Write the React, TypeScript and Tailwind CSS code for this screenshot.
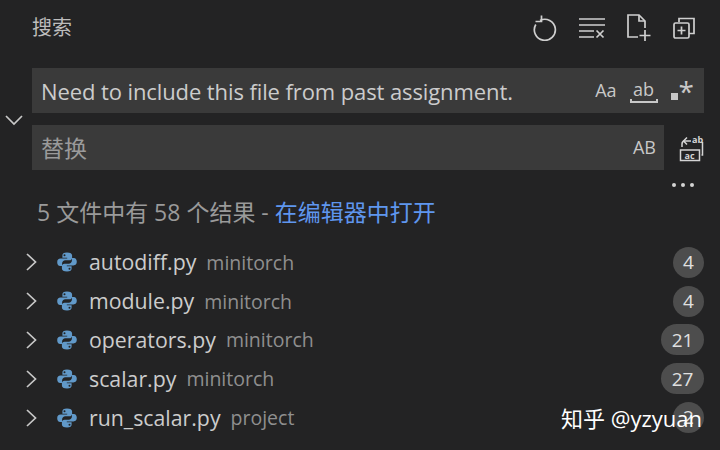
const font = { fontFamily: '"Open Sans", "Noto Sans CJK SC", sans-serif' };

const results = [
  { name: "autodiff.py", dir: "minitorch", count: "4" },
  { name: "module.py", dir: "minitorch", count: "4" },
  { name: "operators.py", dir: "minitorch", count: "21" },
  { name: "scalar.py", dir: "minitorch", count: "27" },
  { name: "run_scalar.py", dir: "project", count: "2" },
];

const PythonIcon = () => (
  <svg width="22" height="22" viewBox="0 0 22 22" className="shrink-0">
    <path d="M11 1.500c-3.400 0-4.600 1.200-4.600 3v2.200h4.800v.9H4.600C2.400 7.600 1.200 9 1.200 11.200s1.200 3.700 3 3.700h1.900v-2.400c0-1.900 1.400-3.200 3.200-3.200h4.200c1.500 0 2.600-1.100 2.600-2.600V4.500c0-1.900-1.700-3-5.100-3z" fill="#6199c9" />
    <path d="M11 20.500c3.400 0 4.600-1.200 4.600-3v-2.200h-4.800v-.9h6.600c2.200 0 3.400-1.400 3.400-3.600s-1.200-3.700-3-3.700h-1.900v2.400c0 1.900-1.400 3.200-3.200 3.200H8.500c-1.500 0-2.600 1.100-2.600 2.600v2.200c0 1.900 1.700 3 5.100 3z" fill="#6199c9" />
    <circle cx="8.500" cy="4.200" r="1" fill="#232324" />
    <circle cx="13.500" cy="17.800" r="1" fill="#232324" />
  </svg>
);

const Chevron = () => (
  <svg width="14" height="20" viewBox="0 0 14 20" fill="none" stroke="#c8c8c8" strokeWidth="1.700" className="shrink-0">
    <path d="M3 2l8.500 8L3 18" />
  </svg>
);

const HeaderIcons = () => (
  <div className="flex items-center gap-5">
    <svg width="26" height="26" viewBox="0 0 26 26" fill="none" stroke="#cfcfcf" strokeWidth="1.700">
      <path d="M8 5.500A10.500 10.500 0 1 1 3.800 9.500" />
      <path d="M9.500 0.500V6.500H3.500" />
    </svg>
    <svg width="28" height="26" viewBox="0 0 28 26" fill="none" stroke="#cfcfcf" strokeWidth="1.700">
      <path d="M1 4h26M1 10h26M1 16h15M1 22h15" />
      <path d="M18.500 15.500l7 7M25.500 15.500l-7 7" />
    </svg>
    <svg width="26" height="28" viewBox="0 0 26 28" fill="none" stroke="#cfcfcf" strokeWidth="1.700">
      <path d="M12 23H2V1h11l6 6v7" />
      <path d="M13 1v6h6" />
      <path d="M19 16v11M13.500 21.500h11" />
    </svg>
    <svg width="24" height="24" viewBox="0 0 24 24" fill="none" stroke="#cfcfcf" strokeWidth="1.700">
      <path d="M7 6V2.500h15v15h-5" />
      <rect x="2" y="7" width="15" height="15" rx="1.500" />
      <path d="M9.500 10.500v8M5.500 14.500h8" />
    </svg>
  </div>
);

const ReplaceAllIcon = () => (
  <svg width="26" height="28" viewBox="0 0 26 28" fill="none" stroke="#d4d4d4" strokeWidth="1.500">
    <path d="M13 7H7a3 3 0 0 0-3 3v3" />
    <path d="M9 3.500L5.500 7 9 10.500" />
    <rect x="2.500" y="16" width="19" height="10.500" />
    <path d="M24.500 8v13h-1" />
    <text x="14" y="8.500" fontSize="9" fontWeight="700" fill="#d4d4d4" stroke="none">ab</text>
    <text x="6.500" y="24.500" fontSize="9" fontWeight="700" fill="#d4d4d4" stroke="none">ac</text>
  </svg>
);

export default function App() {
  return (
    <div className="relative w-[720px] h-[450px] overflow-hidden bg-[#232324] text-[#cccccc]" style={font}>
      <div className="flex items-center justify-between h-[56px] pl-8 pr-6">
        <span className="text-[20px] text-[#bdbdbd]">搜索</span>
        <HeaderIcons />
      </div>

      <div className="flex items-center mt-3 pl-1">
        <svg width="20" height="14" viewBox="0 0 20 14" fill="none" stroke="#c8c8c8" strokeWidth="1.700" className="shrink-0 mt-[2px]">
          <path d="M2 3l8 8 8-8" />
        </svg>
        <div className="flex flex-col gap-3 ml-2 w-[672px]">
          <div className="flex items-center justify-between h-[45px] bg-[#3a3a3a] pl-[9px] pr-[10px]">
            <span className="text-[22px] tracking-[-0.1px] pt-[2px]">Need to include this file from past assignment.</span>
            <div className="flex items-center gap-[13px] text-[#c8c8c8]">
              <span className="text-[18px]">Aa</span>
              <span className="flex flex-col items-center w-[28px]">
                <span className="text-[18px] leading-[20px]">ab</span>
                <span className="w-full h-[4px] border-x-2 border-b-2 border-[#c8c8c8]" />
              </span>
              <span className="flex items-start">
                <span className="w-[7px] h-[7px] bg-[#c8c8c8] mt-[13px] mr-[1px]" />
                <span className="text-[28px] leading-[22px]">*</span>
              </span>
            </div>
          </div>
          <div className="flex items-center gap-[14px]">
            <div className="flex items-center justify-between w-[632px] h-[45px] bg-[#3a3a3a] pl-[9px] pr-2">
              <span className="text-[23px] text-[#9a9a9a] pt-[1px]">替换</span>
              <span className="text-[18px] text-[#c8c8c8]">AB</span>
            </div>
            <ReplaceAllIcon />
          </div>
        </div>
      </div>

      <div className="flex justify-end gap-[5px] pr-[26px] mt-[13px]">
        <span className="w-1 h-1 rounded-full bg-[#d4d4d4]" />
        <span className="w-1 h-1 rounded-full bg-[#d4d4d4]" />
        <span className="w-1 h-1 rounded-full bg-[#d4d4d4]" />
      </div>

      <div className="pl-[37px] mt-[10px] text-[23px] leading-[30px] text-[#9a9a9a]">
        5 文件中有 58 个结果 - <span className="text-[#5f96ee]">在编辑器中打开</span>
      </div>

      <div className="flex flex-col mt-[16px]">
        {results.map((r) => (
          <div key={r.name} className="flex items-center h-[38.800px] pl-6 pr-[16px]">
            <Chevron />
            <span className="ml-[18px] flex"><PythonIcon /></span>
            <span className="ml-[11px] text-[21.300px] text-[#cccccc]">{r.name}</span>
            <span className="ml-[10px] text-[19.500px] text-[#8f8f8f]">{r.dir}</span>
            <span
              className={`ml-auto h-[31px] rounded-full bg-[#4d4d4d] flex items-center justify-center text-[19px] text-[#e0e0e0] ${r.count.length > 1 ? "w-[43px]" : "w-[31px]"}`}
            >
              {r.count}
            </span>
          </div>
        ))}
      </div>

      <div className="absolute left-[561px] top-[402px] text-[22px] leading-[32px] text-white whitespace-nowrap">知乎 @yzyuan</div>
    </div>
  );
}
